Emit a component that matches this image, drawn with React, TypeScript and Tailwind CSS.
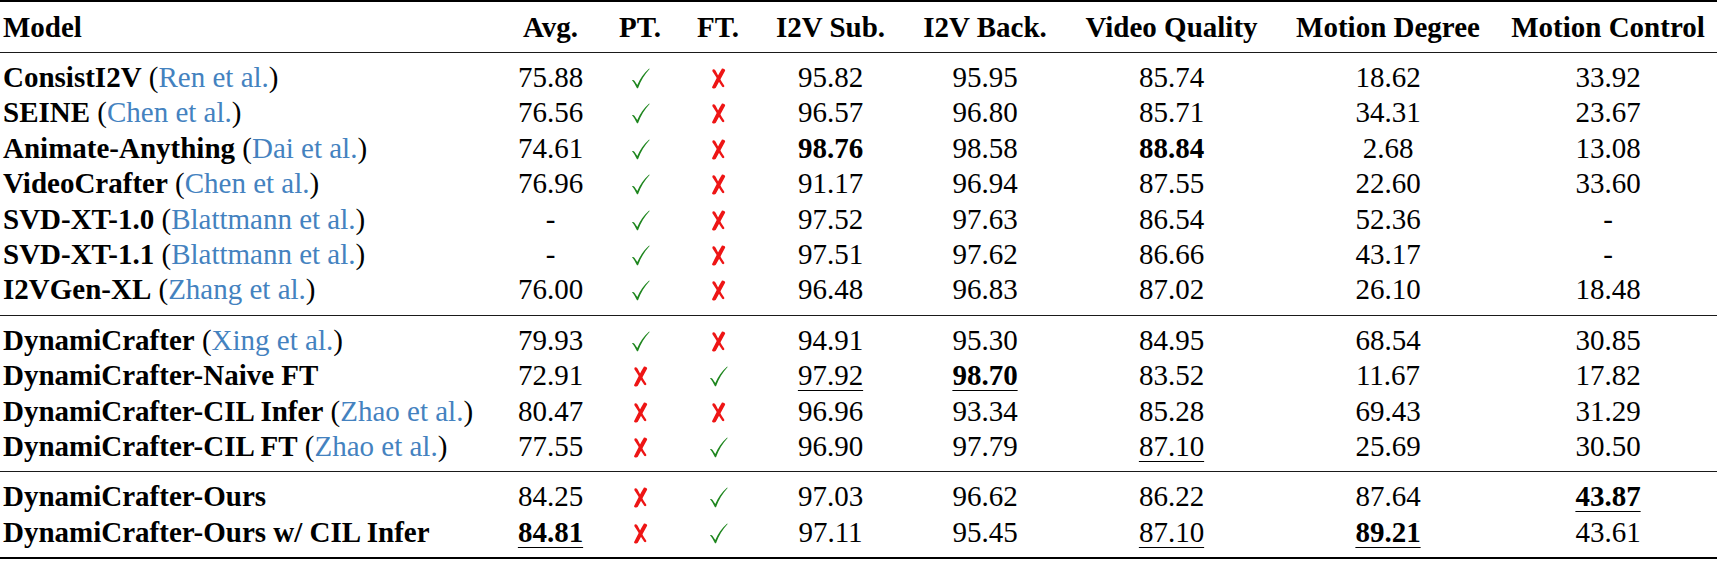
import type { ReactNode } from 'react'

// Column widths match the reference table, values are centered in each column
const GRID =
  'grid grid-cols-[500px_101px_78px_78px_147px_162px_211px_222px_218px] leading-[35.4px]'

type Row = {
  name: string
  cite?: string
  avg: string
  pt: boolean
  ft: boolean
  vals: string[]
}

// "*" prefix = bold, "_" prefix = underline
const GROUPS: Row[][] = [
  [
    { name: 'ConsistI2V', cite: 'Ren et al.', avg: '75.88', pt: true, ft: false, vals: ['95.82', '95.95', '85.74', '18.62', '33.92'] },
    { name: 'SEINE', cite: 'Chen et al.', avg: '76.56', pt: true, ft: false, vals: ['96.57', '96.80', '85.71', '34.31', '23.67'] },
    { name: 'Animate-Anything', cite: 'Dai et al.', avg: '74.61', pt: true, ft: false, vals: ['*98.76', '98.58', '*88.84', '2.68', '13.08'] },
    { name: 'VideoCrafter', cite: 'Chen et al.', avg: '76.96', pt: true, ft: false, vals: ['91.17', '96.94', '87.55', '22.60', '33.60'] },
    { name: 'SVD-XT-1.0', cite: 'Blattmann et al.', avg: '-', pt: true, ft: false, vals: ['97.52', '97.63', '86.54', '52.36', '-'] },
    { name: 'SVD-XT-1.1', cite: 'Blattmann et al.', avg: '-', pt: true, ft: false, vals: ['97.51', '97.62', '86.66', '43.17', '-'] },
    { name: 'I2VGen-XL', cite: 'Zhang et al.', avg: '76.00', pt: true, ft: false, vals: ['96.48', '96.83', '87.02', '26.10', '18.48'] }
  ],
  [
    { name: 'DynamiCrafter', cite: 'Xing et al.', avg: '79.93', pt: true, ft: false, vals: ['94.91', '95.30', '84.95', '68.54', '30.85'] },
    { name: 'DynamiCrafter-Naive FT', avg: '72.91', pt: false, ft: true, vals: ['_97.92', '*_98.70', '83.52', '11.67', '17.82'] },
    { name: 'DynamiCrafter-CIL Infer', cite: 'Zhao et al.', avg: '80.47', pt: false, ft: false, vals: ['96.96', '93.34', '85.28', '69.43', '31.29'] },
    { name: 'DynamiCrafter-CIL FT', cite: 'Zhao et al.', avg: '77.55', pt: false, ft: true, vals: ['96.90', '97.79', '_87.10', '25.69', '30.50'] }
  ],
  [
    { name: 'DynamiCrafter-Ours', avg: '84.25', pt: false, ft: true, vals: ['97.03', '96.62', '86.22', '87.64', '*_43.87'] },
    { name: 'DynamiCrafter-Ours w/ CIL Infer', avg: '*_84.81', pt: false, ft: true, vals: ['97.11', '95.45', '_87.10', '*_89.21', '43.61'] }
  ]
]

const HEADERS = ['Avg.', 'PT.', 'FT.', 'I2V Sub.', 'I2V Back.', 'Video Quality', 'Motion Degree', 'Motion Control']

const Check = () => (
  <svg width="19" height="21" viewBox="0 0 19 21" className="inline-block align-[-2px]">
    <path
      d="M1 12.2 C2 11.6 2.8 11.9 3.6 13 L6.3 17 C9 11 12.6 5.6 18.2 0.6 L18.6 1.1 C13.6 6.4 9.8 12.6 7 20.2 L6 20.2 C4.6 17.4 3 14.6 1 12.2 Z"
      fill="#1e861e"
    />
  </svg>
)

const Cross = () => (
  <svg width="15" height="21" viewBox="0 0 15 21" className="inline-block align-[-2px]">
    <path
      d="M11 0.4 C12.9 0.3 14.6 1.3 14.1 2.8 C11.2 8.6 7.8 14.3 4.8 19.8 C4 21 1.2 20.7 1 19.3 C4.2 12.8 7.4 6.2 11 0.4 Z"
      fill="#ee1515"
    />
    <path
      d="M2.4 1.3 C3.6 1.2 4.3 2.2 4.9 3.3 C7.5 8.3 10 12.9 13.2 17.4 C13.8 18.6 12.4 19.8 11.2 18.8 C8.1 14.2 5 8.6 1.4 3.2 C1.2 2.2 1.7 1.3 2.4 1.3 Z"
      fill="#ee1515"
    />
  </svg>
)

const Num = ({ raw }: { raw: string }) => {
  let v = raw
  let bold = false
  let under = false
  if (v.startsWith('*')) {
    bold = true
    v = v.slice(1)
  }
  if (v.startsWith('_')) {
    under = true
    v = v.slice(1)
  }
  return (
    <div className="text-center">
      <span
        className={
          (bold ? 'font-bold ' : '') +
          (under ? 'underline decoration-1 underline-offset-[5px]' : '')
        }
      >
        {v}
      </span>
    </div>
  )
}

const Rule = ({ thick }: { thick?: boolean }) => (
  <div className={thick ? 'h-[2px] bg-black' : 'h-px bg-[#1a1a1a]'} />
)

const Section = ({ children, top }: { children: ReactNode; top?: string }) => (
  <div className={(top ?? 'pt-[7px]') + ' pb-[7px]'}>{children}</div>
)

const App = () => {
  return (
    <div className="w-[1717px] h-[562px] bg-white text-black text-[29px] font-['Liberation_Serif',_'Times_New_Roman',_serif]">
      <Rule thick />
      <Section top="pt-[7.5px]">
        <div className={GRID + ' font-bold'}>
          <div className="pl-[3px]">Model</div>
          {HEADERS.map((h) => (
            <div key={h} className="text-center whitespace-nowrap">
              {h}
            </div>
          ))}
        </div>
      </Section>
      {GROUPS.map((group, gi) => (
        <div key={gi}>
          <Rule />
          <Section>
            {group.map((r) => (
              <div key={r.name} className={GRID}>
                <div className="pl-[3px] whitespace-nowrap">
                  <span className="font-bold">{r.name}</span>
                  {r.cite && (
                    <>
                      {' ('}
                      <span className="text-[#4482bf]">{r.cite}</span>
                      {')'}
                    </>
                  )}
                </div>
                <Num raw={r.avg} />
                <div className="text-center">{r.pt ? <Check /> : <Cross />}</div>
                <div className="text-center">{r.ft ? <Check /> : <Cross />}</div>
                {r.vals.map((v, i) => (
                  <Num key={i} raw={v} />
                ))}
              </div>
            ))}
          </Section>
        </div>
      ))}
      <Rule thick />
    </div>
  )
}

export default App
